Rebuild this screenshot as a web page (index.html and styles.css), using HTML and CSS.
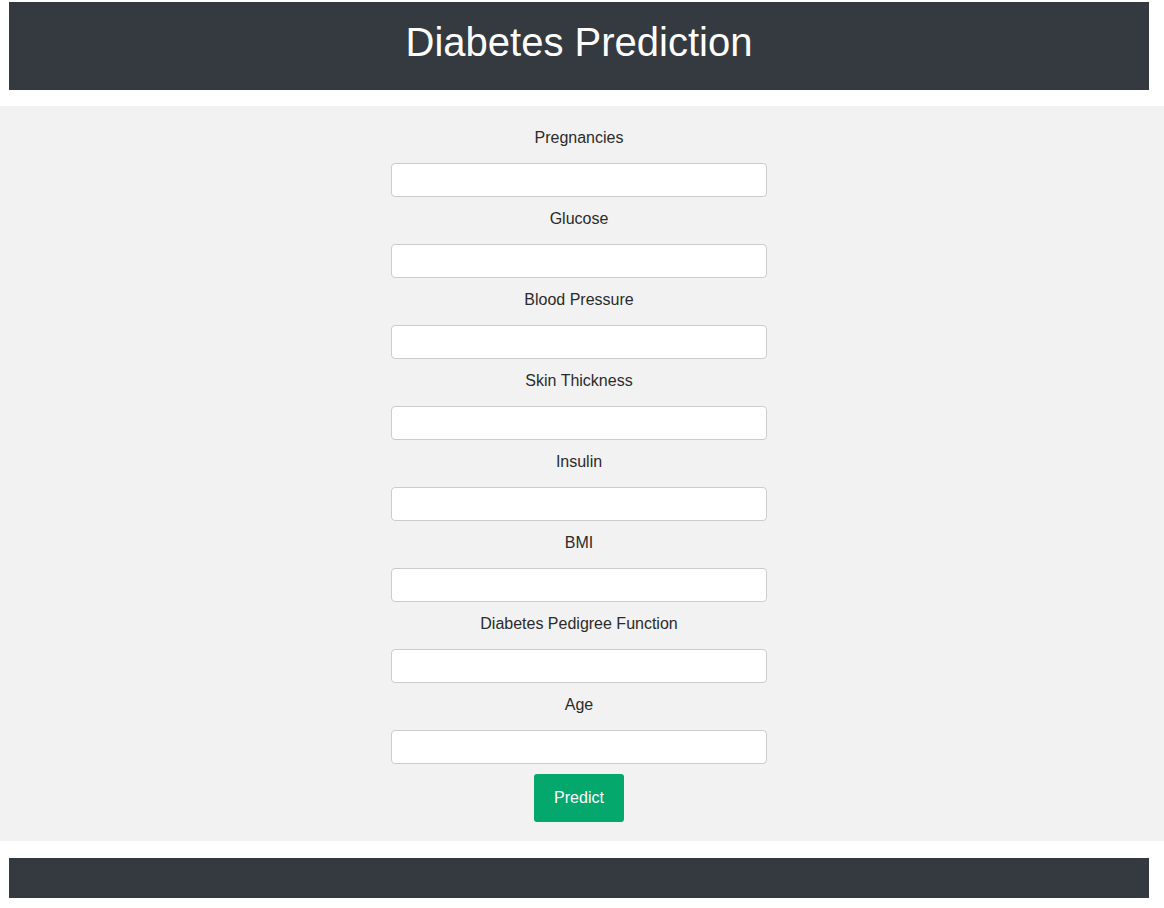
FILE: index.html
```html
<!DOCTYPE html>
<html>
<head>
<meta charset="utf-8">
<link rel="stylesheet" href="styles.css">
</head>
<body>
<header class="topbar"><h1 class="title">Diabetes Prediction</h1></header>
<main class="panel">
  <form class="form">
    <label class="lbl">Pregnancies</label><input class="inp" type="text">
    <label class="lbl">Glucose</label><input class="inp" type="text">
    <label class="lbl">Blood Pressure</label><input class="inp" type="text">
    <label class="lbl">Skin Thickness</label><input class="inp" type="text">
    <label class="lbl">Insulin</label><input class="inp" type="text">
    <label class="lbl">BMI</label><input class="inp" type="text">
    <label class="lbl">Diabetes Pedigree Function</label><input class="inp" type="text">
    <label class="lbl">Age</label><input class="inp" type="text">
    <button class="btn" type="button">Predict</button>
  </form>
</main>
<footer class="footbar"></footer>
</body>
</html>
```
FILE: styles.css
```css
html, body { margin: 0; padding: 0; background: #fff; }
body { font-family: "Liberation Sans", Arial, sans-serif; color: #2b2b2b; padding-top: 2px; }
.topbar {
  background: #343a40;
  margin: 0 15px 0 9px;
  height: 88px;
  display: flex;
  align-items: center;
  justify-content: center;
}
.title {
  margin: 0;
  color: #fff;
  font-weight: 400;
  font-size: 40px;
  line-height: 48px;
  position: relative;
  top: -4px;
}
.panel {
  margin-top: 16px;
  background: #f2f2f2;
  padding: 19px 0 19px;
}
.form {
  display: flex;
  flex-direction: column;
  align-items: center;
  padding-right: 6px;
}
.lbl {
  display: block;
  font-size: 16px;
  line-height: 24px;
  padding-top: 1px;
  margin-bottom: 13px;
  color: #2b2b2b;
}
.inp {
  box-sizing: border-box;
  width: 376px;
  height: 34px;
  border: 1px solid #cccccc;
  border-radius: 4px;
  background: #fff;
  margin: 0 0 9px;
  padding: 6px 12px;
  font: inherit;
}
.inp:last-of-type { margin-bottom: 10px; }
.btn {
  width: 90px;
  height: 48px;
  background: #05a86c;
  color: #fff;
  border: none;
  border-radius: 3px;
  font-family: "Liberation Sans", Arial, sans-serif;
  font-size: 16px;
}
.footbar {
  background: #343a40;
  margin: 17px 15px 0 9px;
  height: 40px;
}
```
